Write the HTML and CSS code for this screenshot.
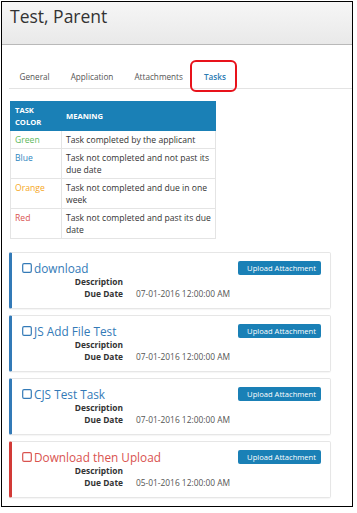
FILE: index.html
```html
<!DOCTYPE html>
<html>
<head>
<meta charset="utf-8">
<link rel="stylesheet" href="styles.css">
</head>
<body>
<div class="frame">
  <header class="page-head">
    <h1 class="page-title">Test, Parent</h1>
  </header>
  <ul class="tabs">
    <li class="tab">General</li>
    <li class="tab">Application</li>
    <li class="tab">Attachments</li>
    <li class="tab active">Tasks</li>
  </ul>
  <table class="legend">
    <thead>
      <tr><th class="c1">Task<br>Color</th><th>Meaning</th></tr>
    </thead>
    <tbody>
      <tr><td class="green">Green</td><td>Task completed by the applicant</td></tr>
      <tr><td class="blue">Blue</td><td>Task not completed and not past its due date</td></tr>
      <tr><td class="orange">Orange</td><td>Task not completed and due in one week</td></tr>
      <tr><td class="red">Red</td><td>Task not completed and past its due date</td></tr>
    </tbody>
  </table>
  <div class="tasks">
    <div class="task task-blue">
      <div class="task-top">
        <div class="task-title"><svg class="chk" viewBox="0 0 10 10"><rect x="0.7" y="0.7" width="8.6" height="8.6" rx="1.3"/></svg>download</div>
        <span class="btn">Upload Attachment</span>
      </div>
      <dl class="meta"><dt>Description</dt><dd></dd><dt>Due Date</dt><dd>07-01-2016 12:00:00 AM</dd></dl>
    </div>
    <div class="task task-blue">
      <div class="task-top">
        <div class="task-title"><svg class="chk" viewBox="0 0 10 10"><rect x="0.7" y="0.7" width="8.6" height="8.6" rx="1.3"/></svg>JS Add File Test</div>
        <span class="btn">Upload Attachment</span>
      </div>
      <dl class="meta"><dt>Description</dt><dd></dd><dt>Due Date</dt><dd>07-01-2016 12:00:00 AM</dd></dl>
    </div>
    <div class="task task-blue">
      <div class="task-top">
        <div class="task-title"><svg class="chk" viewBox="0 0 10 10"><rect x="0.7" y="0.7" width="8.6" height="8.6" rx="1.3"/></svg>CJS Test Task</div>
        <span class="btn">Upload Attachment</span>
      </div>
      <dl class="meta"><dt>Description</dt><dd></dd><dt>Due Date</dt><dd>07-01-2016 12:00:00 AM</dd></dl>
    </div>
    <div class="task task-red">
      <div class="task-top">
        <div class="task-title"><svg class="chk" viewBox="0 0 10 10"><rect x="0.7" y="0.7" width="8.6" height="8.6" rx="1.3"/></svg>Download then Upload</div>
        <span class="btn">Upload Attachment</span>
      </div>
      <dl class="meta"><dt>Description</dt><dd></dd><dt>Due Date</dt><dd>05-01-2016 12:00:00 AM</dd></dl>
    </div>
  </div>
</div>
</body>
</html>
```

FILE: styles.css
```css
* { box-sizing: border-box; }
html, body { margin: 0; padding: 0; background: #fff; }
body { font-family: "Open Sans", "DejaVu Sans", sans-serif; color: #333; }

.frame {
  margin: 1px 0 0 1px;
  width: 352px;
  height: 506px;
  border: 1px solid #000;
  overflow: hidden;
}

.page-head {
  height: 43px;
  padding: 2px 8px 0;
  background: linear-gradient(#f6f6f6, #e9e9e9);
  border-bottom: 1px solid #b9b9b9;
}
.page-title {
  margin: 0;
  font-size: 17.5px;
  font-weight: 400;
  line-height: 24px;
  color: #333;
}

.tabs {
  list-style: none;
  margin: 26px 0 0 7px;
  padding: 0;
  display: flex;
  border-bottom: 1px solid #e3e3e3;
}
.tab {
  padding: 0 10.5px 5px;
  font-size: 8.2px;
  line-height: 12px;
  color: #555;
}
.tab.active {
  position: relative;
  color: #2b7bb3;
  font-weight: 600;
}
.tab.active::after {
  content: "";
  position: absolute;
  left: -3px;
  right: -1px;
  top: -11px;
  bottom: -4px;
  border: 2px solid #e8121b;
  border-radius: 6px;
}

.legend {
  margin: 12px 0 0 8px;
  width: 206px;
  border-collapse: collapse;
  font-size: 8.6px;
  line-height: 12px;
}
.legend th {
  background: #1a80b6;
  color: #fff;
  text-align: left;
  font-weight: 700;
  text-transform: uppercase;
  font-size: 7.6px;
  padding: 2px 4px 2px;
  border: 1px solid #1a80b6;
  border-left: 1px solid #5aa3cb;
}
.legend th.c1 { width: 51px; border-left-color: #1a80b6; }
.legend td {
  padding: 3px 4px 2px;
  border: 1px solid #e4e4e4;
  vertical-align: top;
  color: #333;
}
.legend td.green { color: #5cb85c; }
.legend td.blue { color: #2d86c0; }
.legend td.orange { color: #f5a623; }
.legend td.red { color: #d9534f; }

.tasks {
  margin: 13px 0 0 7px;
  width: 322px;
  display: flex;
  flex-direction: column;
  gap: 6px;
}
.task {
  border: 1px solid #e6e6e6;
  border-left: 3px solid #337ab7;
  border-radius: 2px;
  padding: 7px 9px 8px 10px;
  box-shadow: 0 1px 1px rgba(0,0,0,0.04);
}
.task-red { border-left-color: #d23a36; }
.task-top {
  display: flex;
  justify-content: space-between;
  align-items: center;
  height: 16px;
}
.task-title {
  display: flex;
  align-items: center;
  font-size: 11.8px;
  line-height: 16px;
  color: #337ab7;
}
.task-red .task-title { color: #d9534f; }
.chk {
  width: 10px;
  height: 10px;
  margin-right: 2px;
  fill: none;
  stroke: currentColor;
  stroke-width: 1.2;
}
.btn {
  background: #1a80b6;
  color: #fff;
  font-size: 7.6px;
  line-height: 14px;
  height: 14px;
  padding: 0 5px 0 9px;
  border-radius: 2px;
}
.meta {
  margin: 0;
  display: grid;
  grid-template-columns: 101px 1fr;
  column-gap: 13px;
  font-size: 8.4px;
  line-height: 12px;
}
.meta dt {
  text-align: right;
  font-weight: 700;
  color: #333;
}
.meta dd {
  margin: 0;
  color: #555;
}
```
